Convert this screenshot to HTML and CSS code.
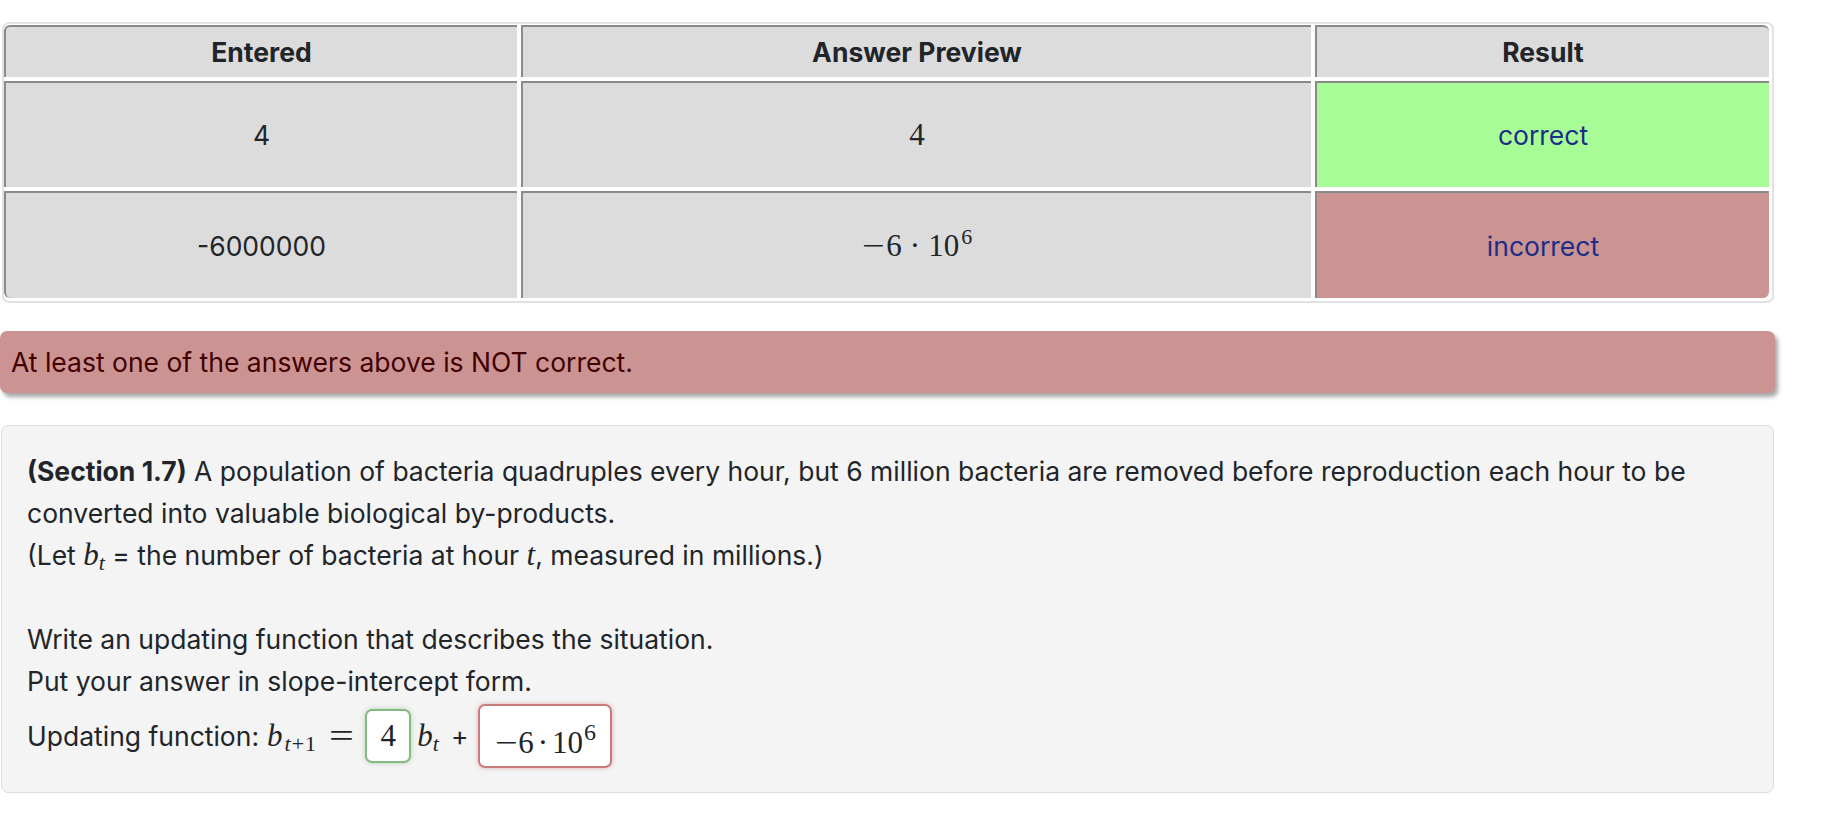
FILE: index.html
```html
<!DOCTYPE html>
<html lang="en">
<head>
<meta charset="utf-8">
<title>Attempt results</title>
<link rel="stylesheet" href="styles.css">
</head>
<body>
<main class="page">
  <div class="results-wrap">
    <table class="results">
      <colgroup>
        <col class="c1">
        <col class="c2">
        <col class="c3">
      </colgroup>
      <thead>
        <tr class="head-row">
          <th>Entered</th>
          <th>Answer Preview</th>
          <th>Result</th>
        </tr>
      </thead>
      <tbody>
        <tr class="row-1">
          <td>4</td>
          <td><span class="math">4</span></td>
          <td class="res-ok">correct</td>
        </tr>
        <tr class="row-2">
          <td>-6000000</td>
          <td><span class="math"><span class="minus">−</span>6<span class="cdot">·</span>10<sup class="sup">6</sup></span></td>
          <td class="res-bad">incorrect</td>
        </tr>
      </tbody>
    </table>
  </div>

  <div class="alert">At least one of the answers above is NOT correct.</div>

  <div class="problem">
    <div class="line"><b>(Section 1.7)</b> A population of bacteria quadruples every hour, but 6 million bacteria are removed before reproduction each hour to be</div>
    <div class="line">converted into valuable biological by-products.</div>
    <div class="line">(Let <span class="math mi">b<sub class="sub">t</sub></span> = the number of bacteria at hour <span class="math mi">t</span>, measured in millions.)</div>
    <div class="line blank"></div>
    <div class="line">Write an updating function that describes the situation.</div>
    <div class="line">Put your answer in slope-intercept form.</div>
    <div class="answer-line">
      <span class="txt">Updating function:</span>
      <span class="math lhs"><i>b</i><sub class="sub sub-wide"><i>t</i><span class="subplus">+</span>1</sub></span>
      <span class="math eq">=</span>
      <span class="ans ans-ok"><span class="math">4</span></span>
      <span class="math bt"><i>b</i><sub class="sub"><i>t</i></sub></span>
      <span class="txt plus">+</span>
      <span class="ans ans-bad"><span class="math"><span class="minus minus-t">−</span>6<span class="cdot-tight">·</span>10<sup class="sup2">6</sup></span></span>
    </div>
  </div>
</main>
</body>
</html>
```

FILE: styles.css
```css
* {
  box-sizing: border-box;
}

html,
body {
  margin: 0;
  padding: 0;
  background: #ffffff;
}

body {
  font-family: Inter, "Liberation Sans", Arial, sans-serif;
  font-size: 26.5px;
  line-height: 42px;
  color: #212529;
}

.page {
  width: 1775px;
  padding-top: 22px;
}

/* ---------- results table ---------- */

.results-wrap {
  margin: 0 1px 0 2px;
  border: 2px solid #e2e2e2;
  border-radius: 7px;
}

.results {
  table-layout: fixed;
  border-collapse: separate;
  border-spacing: 4px;
  width: calc(100% + 5px);
  margin: -3px -1px -1px -4px;
}

.c1 { width: 513px; }
.c2 { width: 790px; }
.c3 { width: 454px; }

.head-row { height: 52px; }
.row-1 { height: 106px; }
.row-2 { height: 107px; }

.results th,
.results td {
  background: #dcdcdc;
  border-top: 2px solid #8a8a8a;
  border-left: 2px solid #8a8a8a;
  padding: 0 8px;
  text-align: center;
  vertical-align: middle;
  font-weight: 400;
}

.results th {
  font-weight: 700;
  color: #212529;
}

.results thead th:first-child { border-top-left-radius: 6px; }
.results thead th:last-child { border-top-right-radius: 6px; }
.results tbody tr:last-child td:first-child { border-bottom-left-radius: 6px; }
.results tbody tr:last-child td:last-child { border-bottom-right-radius: 6px; }

.results td.res-ok {
  background: #a7fc95;
  color: #1b2d86;
}

.results td.res-bad {
  background: #cc9393;
  color: #1b2d86;
}

/* ---------- math ---------- */

.math {
  font-family: "Liberation Serif", "Times New Roman", serif;
  font-size: 31px;
  color: #212529;
  font-style: normal;
}

.mi {
  font-style: italic;
}

.math i {
  font-style: italic;
}

.sub {
  font-size: 22px;
  vertical-align: -5px;
  line-height: 0;
}

.sub-wide {
  margin-left: 2px;
  margin-right: 2px;
}

.subplus {
  margin: 0 1px;
}

.minus {
  display: inline-block;
  transform: scaleX(1.3);
  transform-origin: left center;
  margin-right: 7px;
}

.minus-t {
  margin-right: 6px;
}

.sup {
  font-size: 22px;
  vertical-align: 12px;
  line-height: 0;
  margin-left: 2px;
}

.sup2 {
  font-size: 24px;
  vertical-align: 13px;
  line-height: 0;
  margin-left: 1px;
}

.cdot {
  margin: 0 8px;
}

.cdot-tight {
  margin: 0 4px;
}

/* ---------- alert ---------- */

.alert {
  margin-top: 28px;
  height: 62px;
  padding: 10px 11px;
  background: #cc9393;
  color: #420000;
  border-radius: 7px;
  box-shadow: 3px 4px 4px rgba(0, 0, 0, 0.35);
}

/* ---------- problem ---------- */

.problem {
  margin: 32px 1px 0 1px;
  padding: 24px 25px 24px 25px;
  background: #f4f4f4;
  border: 1px solid #dedede;
  border-radius: 7px;
}

.line {
  height: 42px;
  white-space: nowrap;
}

.line b {
  font-weight: 700;
}

.answer-line {
  margin-top: 2px;
  height: 64px;
  display: flex;
  align-items: center;
  white-space: nowrap;
}

.answer-line .txt {
  line-height: 42px;
}

.lhs {
  margin-left: 8px;
}

.eq {
  display: inline-block;
  font-size: 34px;
  transform: scaleX(1.3);
  margin: 0 14px 0 14px;
}

.ans {
  display: block;
  background: #ffffff;
  border-radius: 7px;
  text-align: center;
}

.ans-ok {
  width: 46px;
  height: 54px;
  border: 2px solid #86b981;
  box-shadow: 0 0 5px rgba(60, 150, 60, 0.35);
  line-height: 50px;
}

.ans-bad {
  width: 134px;
  height: 64px;
  border: 2px solid #c97b7b;
  box-shadow: 0 0 5px rgba(190, 60, 60, 0.35);
  padding-top: 14px;
  line-height: 46px;
}

.ans .math {
  line-height: inherit;
}

.bt {
  margin-left: 6px;
}

.plus {
  margin: 0 10px 0 12px;
}
```
